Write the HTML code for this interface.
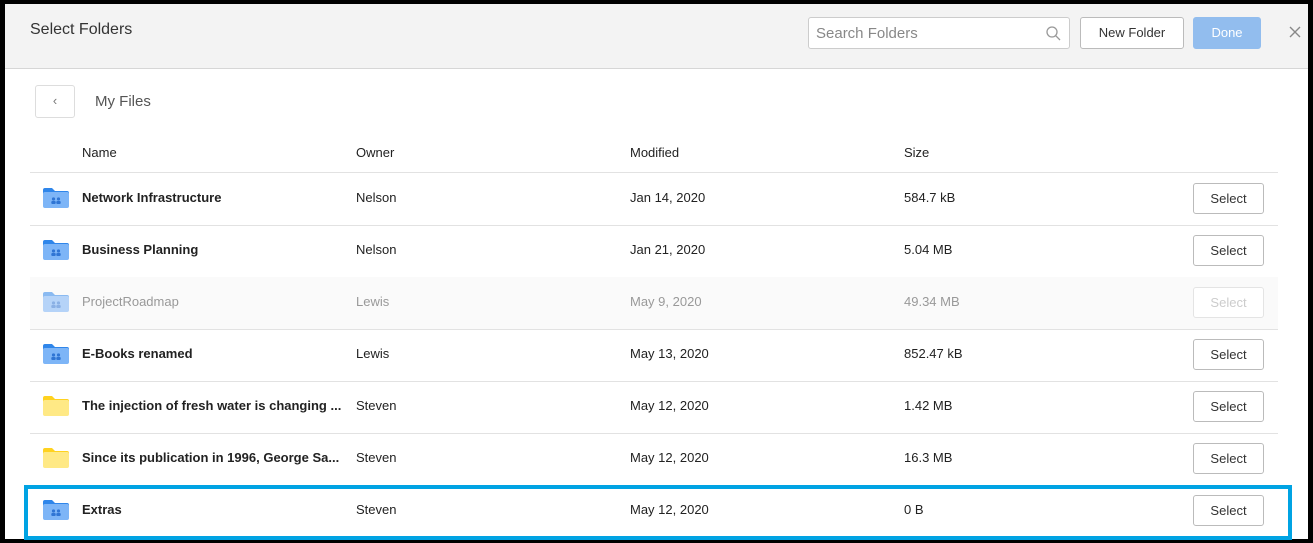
<!DOCTYPE html>
<html><head><style>
*{box-sizing:border-box;margin:0;padding:0}
body{width:1313px;height:543px;background:#000;position:relative;overflow:hidden;font-family:"Liberation Sans",sans-serif;color:#222}
.win{position:absolute;left:5px;top:4px;width:1303px;height:535px;background:#fff}
.hdr{position:absolute;left:0;top:0;width:1303px;height:65px;background:#f3f3f3;border-bottom:1px solid #d6d6d6}
.title{position:absolute;left:25px;top:17px;font-size:16px;color:#333}
.search{position:absolute;left:803px;top:13px;width:262px;height:32px;border:1px solid #ccc;border-radius:3px;background:#fff;font-size:15px;color:#888;padding:7px 7px}
.btn{position:absolute;border:1px solid #bbb;border-radius:3px;background:#fff;font-size:13px;text-align:center;color:#333}
.a{position:absolute;font-size:13px;white-space:nowrap}
.line{position:absolute;left:25px;width:1248px;height:1px;background:#e2e2e2}
.b{font-weight:bold}
</style></head><body>
<div class="win">
<div class="hdr">
<div class="title">Select Folders</div>
<div class="search">Search Folders
<svg style="position:absolute;right:8px;top:8px" width="15" height="15" viewBox="0 0 15 15"><circle cx="6" cy="6" r="5" fill="none" stroke="#999" stroke-width="1.3"/><line x1="9.7" y1="9.7" x2="14" y2="14" stroke="#999" stroke-width="1.3"/></svg></div>
<div class="btn" style="left:1075px;top:13px;width:104px;height:32px;line-height:30px">New Folder</div>
<div class="btn" style="left:1188px;top:13px;width:68px;height:32px;line-height:30px;background:#92bdee;border-color:#92bdee;color:#fff">Done</div>
<svg style="position:absolute;left:1284px;top:22px" width="12" height="12"><path d="M1 1L11 11M11 1L1 11" stroke="#888" stroke-width="1.4"/></svg>
</div>
<div class="btn" style="left:30px;top:81px;width:40px;height:33px;line-height:30px;border-color:#ddd;color:#777">‹</div>
<div class="a" style="left:90px;top:89px;font-size:15px;color:#555">My Files</div>
<div class="a" style="left:77px;top:141px">Name</div>
<div class="a" style="left:351px;top:141px">Owner</div>
<div class="a" style="left:625px;top:141px">Modified</div>
<div class="a" style="left:899px;top:141px">Size</div>
<div class="line" style="top:168px"></div>
<div id="rows"></div>
<div style="position:absolute;left:19px;top:481px;width:1268px;height:55px;border:4px solid #00a3e3"></div>
</div>
<script>
var d=[["Network Infrastructure","Nelson","Jan 14, 2020","584.7 kB",0],["Business Planning","Nelson","Jan 21, 2020","5.04 MB",0],["ProjectRoadmap","Lewis","May 9, 2020","49.34 MB",2],["E-Books renamed","Lewis","May 13, 2020","852.47 kB",0],["The injection of fresh water is changing ...","Steven","May 12, 2020","1.42 MB",1],["Since its publication in 1996, George Sa...","Steven","May 12, 2020","16.3 MB",1],["Extras","Steven","May 12, 2020","0 B",0]];
var h="";
d.forEach(function(r,i){var t=169+i*52,c=t+24,dis=r[4]==2,col=dis?"#999":"#222";
if(dis)h+='<div style="position:absolute;left:25px;top:'+t+'px;width:1248px;height:52px;background:#fafafa"></div>';
var op=dis?0.55:1;
if(r[4]==1)h+='<svg style="position:absolute;left:38px;top:'+(c-10)+'px" width="26" height="22"><path d="M0 3a2 2 0 0 1 2-2h7l3 3h12a2 2 0 0 1 2 2v2H0z" fill="#ffd21f"/><rect y="5" width="26" height="16" rx="2" fill="#ffe985"/></svg>';
else h+='<svg style="position:absolute;left:38px;top:'+(c-10)+'px;opacity:'+op+'" width="26" height="22"><path d="M0 3a2 2 0 0 1 2-2h7l3 3h12a2 2 0 0 1 2 2v2H0z" fill="#2f86ea"/><rect y="5" width="26" height="16" rx="2" fill="#7db5f7"/><circle cx="10.5" cy="12" r="1.6" fill="#2f75d4"/><circle cx="15.5" cy="12" r="1.6" fill="#2f75d4"/><rect x="8.3" y="14" width="4.4" height="3" rx="1" fill="#2f75d4"/><rect x="13.3" y="14" width="4.4" height="3" rx="1" fill="#2f75d4"/></svg>';
h+='<div class="a '+(dis?'':'b')+'" style="left:77px;top:'+(c-7)+'px;color:'+col+'">'+r[0]+'</div>';
h+='<div class="a" style="left:351px;top:'+(c-7)+'px;color:'+col+'">'+r[1]+'</div>';
h+='<div class="a" style="left:625px;top:'+(c-7)+'px;color:'+col+'">'+r[2]+'</div>';
h+='<div class="a" style="left:899px;top:'+(c-7)+'px;color:'+col+'">'+r[3]+'</div>';
h+='<div class="btn" style="left:1188px;top:'+(c-14)+'px;width:71px;height:31px;line-height:29px;'+(dis?'border-color:#e4e4e4;color:#ccc':'')+'">Select</div>';
if(i<6)h+='<div class="line" style="top:'+(t+52)+'px"></div>';});
document.getElementById("rows").outerHTML=h;
</script>
</body></html>
